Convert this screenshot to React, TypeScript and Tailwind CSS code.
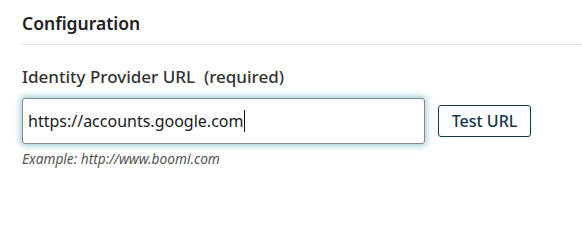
export default function App() {
  return (
    <div className="w-[582px] h-[205px] bg-white pl-[22px] pt-[10px] font-['Noto_Sans','Open_Sans',sans-serif] text-[#333]">
      <h2 className="text-[17.5px] font-semibold leading-[26px] text-[#222]">Configuration</h2>
      <div className="mt-[8px] h-px bg-[#e2e2e2]" />
      <div className="mt-[20px] text-[17px] font-medium leading-[24px] text-[#333]">
        Identity Provider URL&nbsp;&nbsp;(required)
      </div>
      <div className="mt-[9px] flex items-center gap-[13px]">
        <div className="relative w-[403px] h-[46px] rounded-[3px] border border-[#8a8a8a] bg-white shadow-[0_0_6px_2px_rgba(90,170,175,0.55)] flex items-center pl-[5px]">
          <span className="text-[16px] text-[#1a1a1a]">https://accounts.google.com</span>
          <span className="ml-px w-px h-[22px] bg-[#111]" />
        </div>
        <button className="w-[93px] h-[32px] rounded-[3px] border border-[#0e3a55] text-[16px] font-medium text-[#14354d] bg-white">
          Test URL
        </button>
      </div>
      <div className="mt-[5px] text-[13.7px] italic text-[#555]">Example: http://www.boomi.com</div>
    </div>
  );
}
